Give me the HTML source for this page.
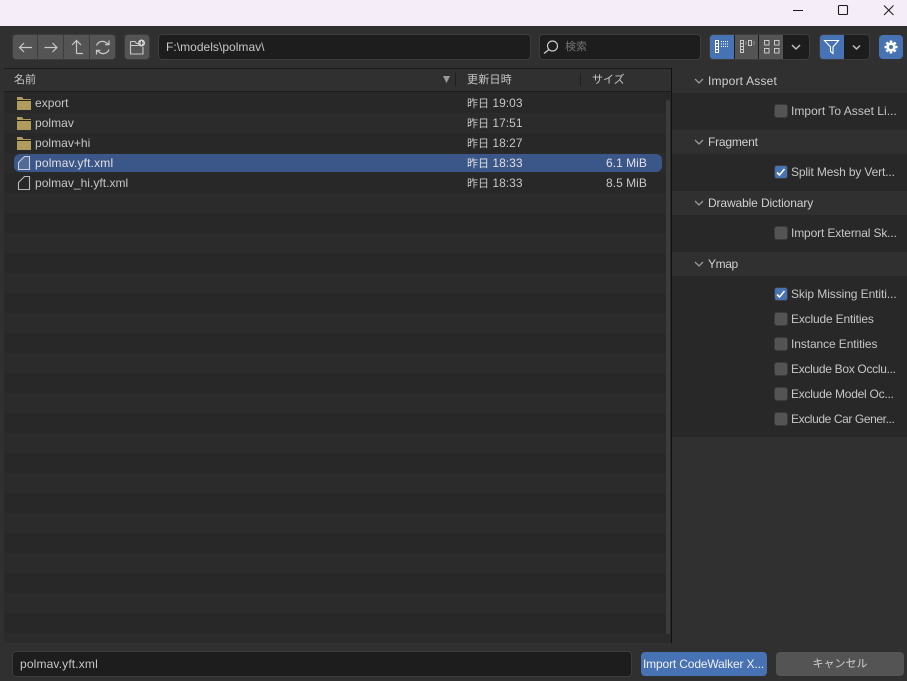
<!DOCTYPE html>
<html><head><meta charset="utf-8"><style>
html,body{margin:0;padding:0;width:907px;height:681px;overflow:hidden;background:#303030}
body{position:relative;font-family:"Liberation Sans","Noto Sans CJK JP",sans-serif;font-size:12px;letter-spacing:.03px;color:#c6c6c6}
div{position:absolute;box-sizing:border-box}
.t{white-space:nowrap;line-height:16px;height:16px}
.c{font-size:11px;letter-spacing:0}
svg{position:absolute;overflow:visible}
.cb{width:14px;height:14px;left:774px;background:#545454;border-radius:3px;border:1px solid #3c3c3c}
.cb.on{background:#4772b3}
.bd{left:672px;width:235px;background:#282828}
.ic{stroke:#c8c8c8;fill:none;stroke-width:1.2}
</style></head><body>
<div style="left:0;top:0;width:907px;height:26px;background:#f5edf7"></div>
<svg style="left:0;top:0" width="907" height="26"><path d="M793 10.500H803" stroke="#1a1a1a" fill="none"/><rect x="838.500" y="5.500" width="9" height="9" rx="1" stroke="#1a1a1a" fill="none" stroke-width="1.100"/><path d="M884 5.500L893.500 15M893.500 5.500L884 15" stroke="#1a1a1a" fill="none"/></svg>

<!-- top toolbar -->
<div style="left:12px;top:34px;width:104px;height:26px;background:#545454;border-radius:4px;border:1px solid #3d3d3d"></div>
<div style="left:37px;top:35px;width:1px;height:24px;background:#3d3d3d"></div>
<div style="left:63px;top:35px;width:1px;height:24px;background:#3d3d3d"></div>
<div style="left:89px;top:35px;width:1px;height:24px;background:#3d3d3d"></div>
<svg class="ic" style="left:0;top:0" width="130" height="62">
<path d="M19.500 47.500H32M24 43L19.500 47.500L24 52"/>
<path d="M44.500 47.500H57M52.500 43L57 47.500L52.500 52"/>
<path d="M76.500 53.500H83M76.500 53.500V40.500M72 45L76.500 40.500L81 45"/>
<path d="M96.500 45.500C98 41.500 103 40 106.500 43L109 44.500M109 40.500V44.700H105M109 49.500C107.500 53.500 102.500 55 99 52L96.500 50.500M96.500 54.500V50.300H100.500"/>
</svg>
<div style="left:124px;top:34px;width:26px;height:26px;background:#545454;border-radius:4px;border:1px solid #3d3d3d"></div>
<svg style="left:0;top:0" width="150" height="62"><path d="M130.500 41.500H135L136.500 43.500H139M130.500 41.500V54H143V47M130.500 45.500H139" stroke="#c8c8c8" fill="none" stroke-width="1.100"/><circle cx="141.500" cy="43" r="3.500" fill="#d8d8d8"/><path d="M139.500 43H143.500M141.500 41V45" stroke="#545454"/></svg>
<div style="left:158px;top:34px;width:373px;height:26px;background:#1d1d1d;border-radius:4px;border:1px solid #3d3d3d"></div>
<div class="t" style="left:166px;top:39px">F:\models\polmav\</div>
<div style="left:539px;top:34px;width:162px;height:26px;background:#1d1d1d;border-radius:4px;border:1px solid #3d3d3d"></div>
<svg style="left:0;top:0" width="570" height="62"><circle cx="552.500" cy="46" r="5" stroke="#c8c8c8" fill="none" stroke-width="1.200"/><path d="M549 49.500L544 53.500" stroke="#c8c8c8" fill="none" stroke-width="1.400"/></svg>
<div class="t c" style="left:565px;top:39px;color:#737373">検索</div>

<div style="left:709px;top:34px;width:101px;height:26px;background:#1d1d1d;border-radius:4px;border:1px solid #3d3d3d"></div>
<div style="left:710px;top:35px;width:24px;height:24px;background:#4772b3;border-radius:3px 0 0 3px"></div>
<div style="left:735px;top:35px;width:23px;height:24px;background:#545454"></div>
<div style="left:759px;top:35px;width:24px;height:24px;background:#545454"></div>
<svg style="left:0;top:0" width="907" height="62" fill="none">
<g stroke="#fff" stroke-width="1"><rect x="715.500" y="40.500" width="3" height="12"/><path d="M715.500 43.500H718.500M715.500 46.500H718.500M715.500 49.500H718.500"/><path d="M721 41.500H729M721 44H729M721 46.500H729" stroke-dasharray="1 1"/></g>
<g stroke="#c8c8c8" stroke-width="1"><rect x="740.500" y="40.500" width="3" height="12"/><path d="M740.500 43.500H743.500M740.500 46.500H743.500M740.500 49.500H743.500"/><rect x="748.500" y="40.500" width="3" height="5"/><path d="M746 41.500V45M754 41.500V45" stroke-dasharray="1 1"/></g>
<g stroke="#c8c8c8" stroke-width="1"><rect x="764.500" y="40.500" width="4.500" height="4.500"/><rect x="774.500" y="40.500" width="4.500" height="4.500"/><rect x="764.500" y="48.500" width="4.500" height="4.500"/><rect x="774.500" y="48.500" width="4.500" height="4.500"/></g>
<path d="M792 45L796 49L800 45" stroke="#c0c0c0" stroke-width="1.500"/>
</svg>
<div style="left:819px;top:34px;width:51px;height:26px;background:#1d1d1d;border-radius:4px;border:1px solid #3d3d3d"></div>
<div style="left:820px;top:35px;width:24px;height:24px;background:#4772b3;border-radius:3px 0 0 3px"></div>
<svg style="left:0;top:0" width="907" height="62" fill="none">
<path d="M824.500 40.500H838.500L833 47V53.500L830.500 51.500V47Z" stroke="#fff" stroke-width="1.100"/>
<path d="M853 45.500L856.500 49L860 45.500" stroke="#c0c0c0" stroke-width="1.500"/>
</svg>
<div style="left:879px;top:35px;width:24px;height:24px;background:#4772b3;border-radius:4px"></div>
<svg style="left:0;top:0" width="907" height="62"><circle cx="891" cy="47" r="4.600" fill="#fff"/><path d="M891 40.500V53.500M884.500 47H897.500M886.400 42.400L895.600 51.600M895.600 42.400L886.400 51.600" stroke="#fff" stroke-width="2.600"/><circle cx="891" cy="47" r="2" fill="#4772b3"/></svg>

<!-- file list -->
<div style="left:4px;top:68px;width:667px;height:1px;background:#1a1a1a"></div>
<div style="left:4px;top:69px;width:667px;height:22px;background:#303030"></div>
<div style="left:4px;top:91px;width:667px;height:1px;background:#1d1d1d"></div>
<div style="left:4px;top:92px;width:667px;height:1px;background:#282828"></div>
<div style="left:4px;top:93px;width:667px;height:550px;background:linear-gradient(#282828 0 20px,#2b2b2b 20px 40px);background-size:100% 40px"></div>
<div style="left:671px;top:68px;width:1px;height:575px;background:#111"></div>
<div class="t c" style="left:14px;top:72px">名前</div>
<svg style="left:0;top:0" width="460" height="90"><path d="M443 76H450L446.500 83Z" fill="#9a9a9a"/></svg>
<div style="left:455px;top:73px;width:1px;height:13px;background:#1f1f1f"></div>
<div class="t c" style="left:467px;top:72px;letter-spacing:.25px">更新日時</div>
<div style="left:580px;top:73px;width:1px;height:13px;background:#1f1f1f"></div>
<div class="t c" style="left:592px;top:72px">サイズ</div>
<div style="left:666px;top:100px;width:4px;height:534px;background:#3c3c3c;border-radius:2px"></div>
<div style="left:14px;top:154px;width:648px;height:18px;background:#3b5689;border-radius:6px"></div>

<svg style="left:0;top:0" width="40" height="200">
<g fill="#b09a5c"><path d="M17 97H22L23.500 99H31V110H17Z"/><path d="M17 117H22L23.500 119H31V130H17Z"/><path d="M17 137H22L23.500 139H31V150H17Z"/></g>
<g stroke="#23211a" fill="none"><path d="M17 100.500H31M17 120.500H31M17 140.500H31"/></g>
<path d="M24.500 156.500H29.500V169.500H18.500V162.500Z" fill="rgba(255,255,255,.12)" stroke="#c8d0e0" stroke-width="1.100"/>
<path d="M24.500 176.500H29.500V189.500H18.500V182.500Z" fill="none" stroke="#b8b8b8" stroke-width="1.100"/>
</svg>
<div class="t" style="left:35px;top:95px">export</div><div class="t" style="left:467px;top:95px"><span class="c">昨日</span> 19:03</div>
<div class="t" style="left:35px;top:115px">polmav</div><div class="t" style="left:467px;top:115px"><span class="c">昨日</span> 17:51</div>
<div class="t" style="left:35px;top:135px">polmav+hi</div><div class="t" style="left:467px;top:135px"><span class="c">昨日</span> 18:27</div>
<div class="t" style="left:35px;top:155px;color:#e0e0e0;letter-spacing:.18px">polmav.yft.xml</div><div class="t" style="left:467px;top:155px;color:#e0e0e0"><span class="c">昨日</span> 18:33</div><div class="t" style="left:606px;top:155px;color:#e0e0e0">6.1 MiB</div>
<div class="t" style="left:35px;top:175px">polmav_hi.yft.xml</div><div class="t" style="left:467px;top:175px"><span class="c">昨日</span> 18:33</div><div class="t" style="left:606px;top:175px">8.5 MiB</div>

<!-- right panels -->
<div class="bd" style="top:93px;height:37px"></div>
<div class="bd" style="top:154px;height:37px"></div>
<div class="bd" style="top:215px;height:37px"></div>
<div class="bd" style="top:276px;height:161px"></div>
<svg style="left:0;top:0" width="720" height="280" fill="none" stroke="#9a9a9a" stroke-width="1.300"><path d="M695 79L699 83L703 79M695 140L699 144L703 140M695 201L699 205L703 201M695 262L699 266L703 262"/></svg>
<div class="t" style="left:708px;top:73px;color:#d0d0d0;letter-spacing:.2px">Import Asset</div>
<div class="t" style="left:708px;top:134px;color:#d0d0d0;letter-spacing:-.2px">Fragment</div>
<div class="t" style="left:708px;top:195px;color:#d0d0d0;letter-spacing:-.12px">Drawable Dictionary</div>
<div class="t" style="left:708px;top:256px;color:#d0d0d0;letter-spacing:-.4px">Ymap</div>

<div class="cb" style="top:104px"></div><div class="t" style="left:791px;top:103px">Import To Asset Li...</div>
<div class="cb on" style="top:165px"></div><div class="t" style="left:791px;top:164px;letter-spacing:-.14px">Split Mesh by Vert...</div>
<div class="cb" style="top:226px"></div><div class="t" style="left:791px;top:225px;letter-spacing:-.14px">Import External Sk...</div>
<div class="cb on" style="top:287px"></div><div class="t" style="left:791px;top:286px;letter-spacing:-.08px">Skip Missing Entiti...</div>
<div class="cb" style="top:312px"></div><div class="t" style="left:791px;top:311px;letter-spacing:-.17px">Exclude Entities</div>
<div class="cb" style="top:337px"></div><div class="t" style="left:791px;top:336px;letter-spacing:-.1px">Instance Entities</div>
<div class="cb" style="top:362px"></div><div class="t" style="left:791px;top:361px;letter-spacing:-.3px">Exclude Box Occlu...</div>
<div class="cb" style="top:387px"></div><div class="t" style="left:791px;top:386px;letter-spacing:-.25px">Exclude Model Oc...</div>
<div class="cb" style="top:412px"></div><div class="t" style="left:791px;top:411px;letter-spacing:-.4px">Exclude Car Gener...</div>
<svg style="left:0;top:0" width="800" height="310" fill="none" stroke="#fff" stroke-width="1.600"><path d="M777 172.500L779.500 175L784.500 169"/><path d="M777 294.500L779.500 297L784.500 291"/></svg>

<!-- bottom -->
<div style="left:12px;top:651px;width:620px;height:26px;background:#1d1d1d;border-radius:4px;border:1px solid #3d3d3d"></div>
<div class="t" style="left:20px;top:656px;letter-spacing:.15px">polmav.yft.xml</div>
<div style="left:641px;top:652px;width:126px;height:24px;background:#4772b3;border-radius:4px"></div>
<div class="t" style="left:643px;top:656px;color:#f0f0f0;letter-spacing:-.15px">Import CodeWalker X...</div>
<div style="left:776px;top:652px;width:128px;height:24px;background:#545454;border-radius:4px"></div>
<div class="t c" style="left:776px;top:656px;width:128px;text-align:center;color:#d0d0d0">キャンセル</div>
</body></html>
